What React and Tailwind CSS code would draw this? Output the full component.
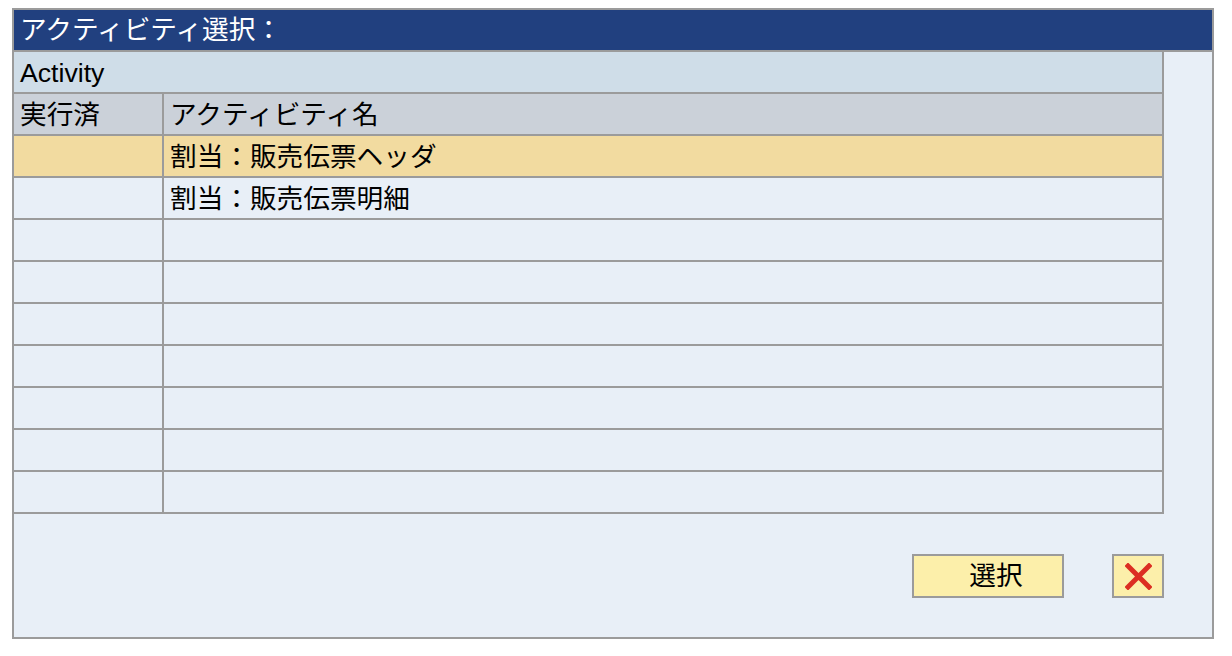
import React from "react";

const font = { fontFamily: '"Liberation Sans", "Noto Sans CJK JP", sans-serif' };

function Row({ left, right, bg }) {
  return (
    <div className={`flex h-[42px] border-b-2 border-[#9b9b9b] ${bg}`}>
      <div className="w-[150px] shrink-0 border-r-2 border-[#9b9b9b] pl-[6px] pt-[2px] flex items-center">{left}</div>
      <div className="flex-1 pl-[6px] pt-[2px] flex items-center">{right}</div>
    </div>
  );
}

export default function App() {
  const rows = [
    { right: "割当：販売伝票ヘッダ", bg: "bg-[#f2dba0]" },
    { right: "割当：販売伝票明細", bg: "" },
    ...Array.from({ length: 7 }, () => ({ right: "", bg: "" })),
  ];
  return (
    <div className="pt-[8px] pl-[12px] bg-white w-[1232px] h-[656px]" style={font}>
      <div className="w-[1202px] h-[631px] border-2 border-[#9b9b9b] bg-[#e8eff7] flex flex-col text-[26.67px] leading-none text-black">
        <div className="h-[42px] shrink-0 bg-[#21407f] border-b-2 border-[#9b9b9b] text-white pl-[6px] flex items-center">
          アクティビティ選択：
        </div>
        <div className="w-[1150px] border-r-2 border-[#9b9b9b]">
          <div className="h-[42px] bg-[#cfdde8] border-b-2 border-[#9b9b9b] pl-[6px] pt-[2px] flex items-center">Activity</div>
          <Row left="実行済" right="アクティビティ名" bg="bg-[#cbd1d9]" />
          {rows.map((r, i) => (
            <Row key={i} left="" right={r.right} bg={r.bg} />
          ))}
        </div>
        <div className="flex justify-end gap-[48px] pr-[48px] mt-[40px]">
          <button className="w-[152px] h-[44px] border-2 border-[#9b9b9b] bg-[#fcefaa] flex items-center justify-center pl-[16px] text-[26.67px]" style={font}>
            選択
          </button>
          <button className="w-[52px] h-[44px] border-2 border-[#9b9b9b] bg-[#fcefaa] flex items-center justify-center">
            <svg width="27" height="27" viewBox="0 0 27 27">
              <path d="M3 3 L24 24 M24 3 L3 24" stroke="#dc2e22" strokeWidth="5" strokeLinecap="square" />
            </svg>
          </button>
        </div>
      </div>
    </div>
  );
}
